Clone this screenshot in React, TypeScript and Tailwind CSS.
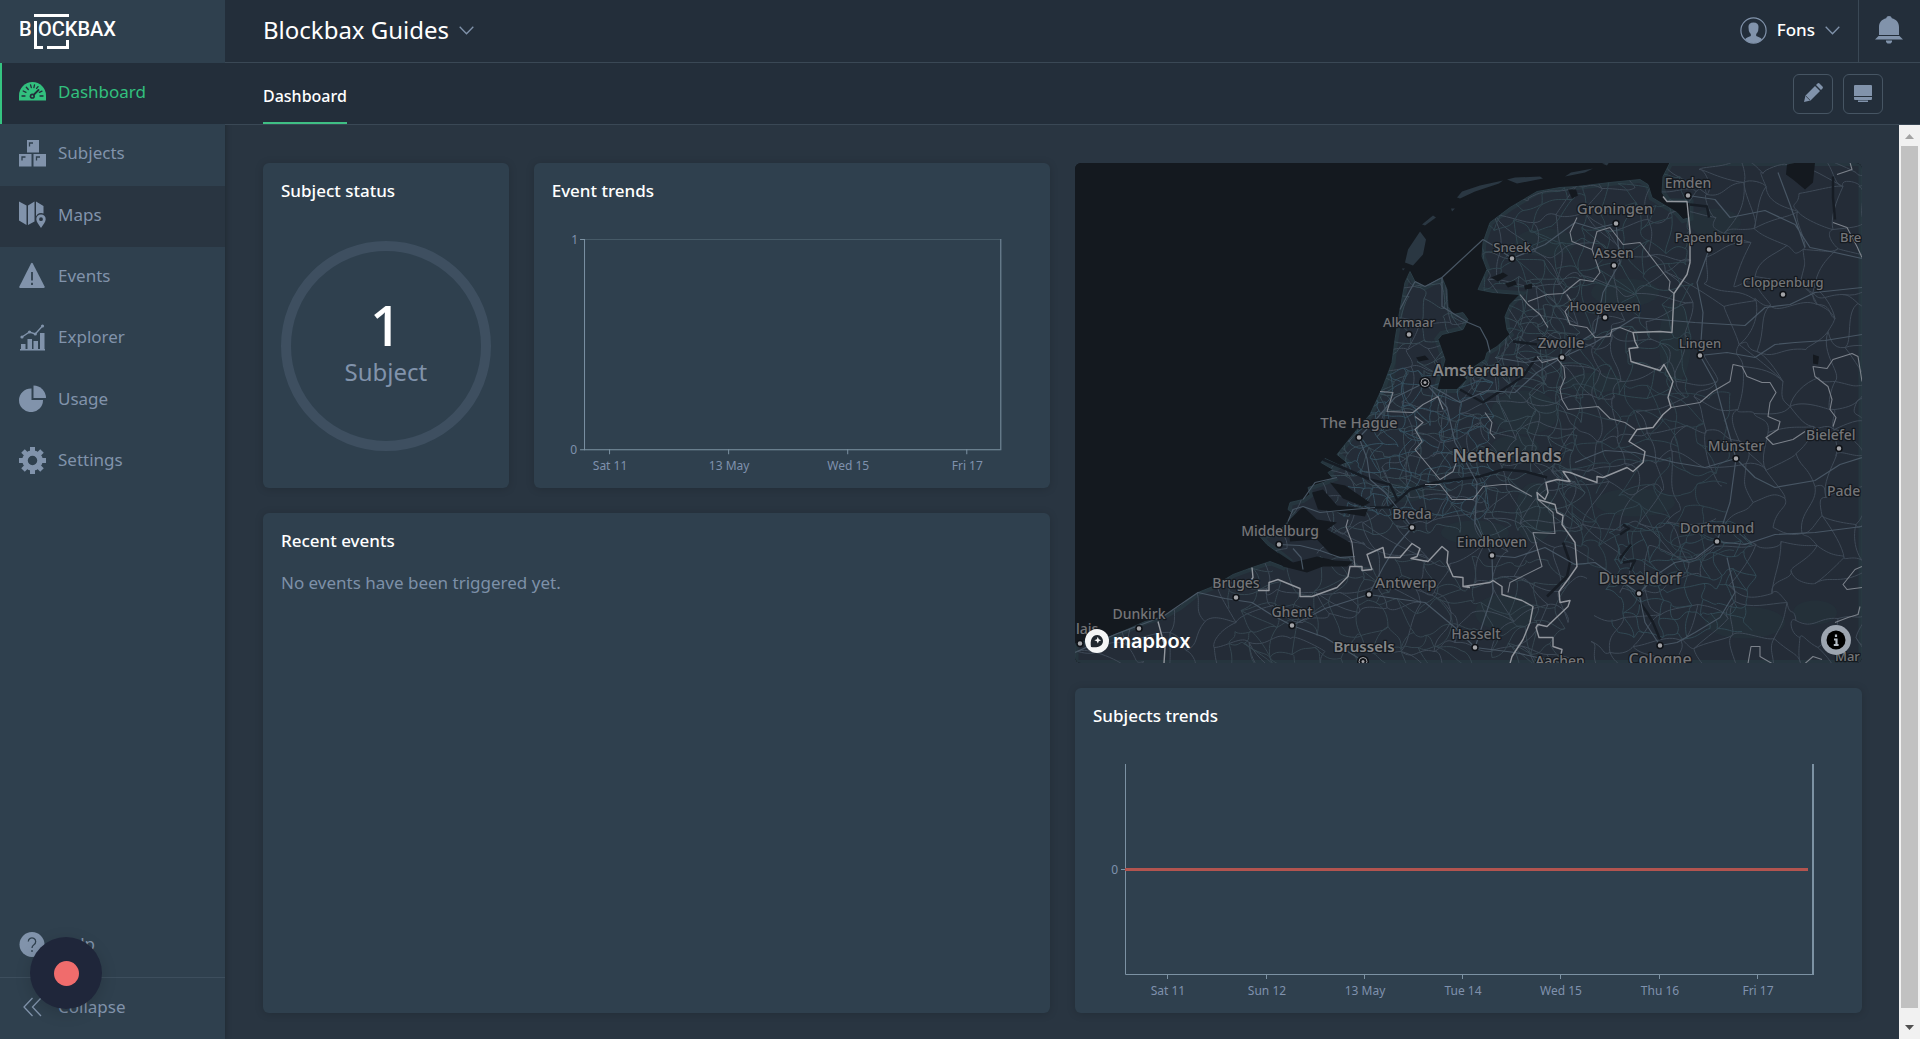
import type { ReactNode } from "react";

type IconProps = { className?: string };

type NavItem = {
  label: string;
  icon: (props: IconProps) => ReactNode;
  state?: "active" | "hover";
};

type Tick = { label: string; x: number };

/* ---------- Icons ---------- */

function GaugeIcon({ className }: IconProps) {
  return (
    <svg className={className} viewBox="0 0 27 27" fill="currentColor">
      <path d="M0 22.500v-5a13.500 13.500 0 0 1 27 0v5z" />
      <g stroke="#232e3a" strokeWidth="1.300" strokeLinecap="round">
        <path d="M3 18h3M21 18h3M4.200 13l2.800 1.300M7.300 9.200l2 2.300M11.500 6.800l.8 2.800M15.500 6.800l-.6 2.800M19 8.600l-1.400 1.800M23 13.200l-2.600 1.200" />
        <path d="M13.500 18 19.500 12" strokeWidth="1.800" />
      </g>
      <circle cx="13.300" cy="18.200" r="2.600" fill="#232e3a" />
      <circle cx="13.300" cy="18.200" r="1" />
    </svg>
  );
}

function BoxesIcon({ className }: IconProps) {
  return (
    <svg className={className} viewBox="0 0 27 27" fill="currentColor">
      <path d="M8 0h12v12.500H8zM0 14h12.500v12.500H0zM14.500 14H27v12.500H14.500z" />
      <path d="M10.500 6.500V3H14M3 20.500V17h3.500M17.500 20.500V17H21" fill="none" stroke="#2f404e" strokeWidth="1.300" />
    </svg>
  );
}

function MapIcon({ className }: IconProps) {
  return (
    <svg className={className} viewBox="0 0 27 27" fill="currentColor">
      <path d="M0 .5 7.500 4.500V24L0 19.500zM9 4.500 15.500.5v20L9 24zM17 .5l7.500 4.500v7.500a5.500 5.500 0 0 0-7.500 3z" />
      <path
        fillRule="evenodd"
        d="M22 13.500a4.600 4.600 0 0 1 4.700 4.700c0 2.700-2.400 5.200-4.700 8.800-2.300-3.600-4.700-6.100-4.700-8.800a4.600 4.600 0 0 1 4.700-4.700zm0 2.800a1.900 1.900 0 1 0 0 3.800 1.900 1.900 0 0 0 0-3.800z"
      />
    </svg>
  );
}

function WarningIcon({ className }: IconProps) {
  return (
    <svg className={className} viewBox="0 0 27 27" fill="currentColor">
      <path d="M12 1.500q.9-1.500 1.800 0L25.600 24.500q.4 1.500-1 1.500H1Q0 26 .4 24.500z" />
      <path d="M13 10v8.500M13 20.800v2.200" stroke="#2f404e" strokeWidth="1.800" />
    </svg>
  );
}

function ExplorerIcon({ className }: IconProps) {
  return (
    <svg className={className} viewBox="0 0 27 27" fill="currentColor">
      <path d="M1 25h25v1.500H1zM2 20h4.500v5.500H2zM8.500 15H13v10.500H8.500zM14.500 17H19v8.500h-4.500zM21 9h4.500v16.500H21z" />
      <path d="M3 13 10.500 8l5.800 2L23.500 2" fill="none" stroke="currentColor" strokeWidth="1.400" />
      <circle cx="3" cy="13" r="1.600" />
      <circle cx="10.500" cy="8" r="1.600" />
      <circle cx="16.300" cy="10" r="1.600" />
      <circle cx="23.500" cy="2" r="1.600" />
    </svg>
  );
}

function PieIcon({ className }: IconProps) {
  return (
    <svg className={className} viewBox="0 0 27 27" fill="currentColor">
      <path d="M12.500 3.500v11.500h11.500A12 11.800 0 1 1 12.500 3.500z" />
      <path d="M14.500.5A12.500 12.500 0 0 1 27 13H14.500z" />
    </svg>
  );
}

function GearIcon({ className }: IconProps) {
  return (
    <svg className={className} viewBox="0 0 27 27" fill="none" stroke="currentColor">
      <circle cx="13.500" cy="13.500" r="7.500" strokeWidth="5.500" />
      <g strokeWidth="5">
        <path d="M13.500 0v4M13.500 23v4M0 13.500h4M23 13.500h4M4 4l3 3M20 20l3 3M23 4l-3 3M7 20l-3 3" />
      </g>
    </svg>
  );
}

function HelpIcon({ className }: IconProps) {
  return (
    <svg className={className} viewBox="0 0 27 27">
      <circle cx="13" cy="13.500" r="12.500" fill="currentColor" />
      <path
        d="M9.300 10.500a3.700 3.700 0 1 1 5.600 3.200c-1.300.8-1.900 1.500-1.900 3.300M13 19v2"
        fill="none"
        stroke="#2f404e"
        strokeWidth="1.300"
      />
    </svg>
  );
}

function ChevronsLeftIcon({ className }: IconProps) {
  return (
    <svg className={className} viewBox="0 0 27 27" fill="none" stroke="currentColor" strokeWidth="1.300">
      <path d="M13.500 5 5 14l8.500 9M22 5l-8.500 9L22 23" />
    </svg>
  );
}

function ChevronDownIcon({ className }: IconProps) {
  return (
    <svg className={className} viewBox="0 0 15 9" fill="none" stroke="currentColor" strokeWidth="1.300">
      <path d="M.7.700 7.500 7.800 14.300.7" />
    </svg>
  );
}

function AvatarIcon({ className }: IconProps) {
  return (
    <svg className={className} viewBox="0 0 27 27">
      <circle cx="13.500" cy="13.500" r="12.600" fill="none" stroke="currentColor" strokeWidth="1.200" />
      <path
        d="M13.500 5.500c3.600 0 5.200 2 5 4.800l-.3 3.200c-.3 1.400-1.200 2.600-2 3.400v2.200c2.500 1.400 4.800 1.600 5.800 3.300a12 12 0 0 1-17 0c1-1.700 3.300-1.900 5.800-3.300v-2.200c-.8-.8-1.700-2-2-3.400l-.3-3.200c-.2-2.800 1.400-4.800 5-4.800z"
        fill="currentColor"
      />
    </svg>
  );
}

function BellIcon({ className }: IconProps) {
  return (
    <svg className={className} viewBox="0 0 28 28" fill="currentColor">
      <path d="M14 0a3 3 0 0 1 2.900 2.300C21.200 3.400 24 6.500 24 11v8H4v-8c0-4.500 2.800-7.600 7.100-8.700A3 3 0 0 1 14 0zM3.500 20h21l3.500 3.500H0zM11 24.500h6v1.500l-1.500 1.500h-3L11 26z" />
    </svg>
  );
}

function PencilIcon({ className }: IconProps) {
  return (
    <svg className={className} viewBox="0 0 20 20" fill="currentColor">
      <path d="M2.500 12.500 12 3l5 5-9.500 9.500L1 19zM13 2l1.500-1.500q1-.8 2 0l3 3q.8 1 0 2L18 7z" />
      <path d="m2.800 13 4.200 4.200" stroke="#232e3a" strokeWidth=".8" />
    </svg>
  );
}

function MonitorIcon({ className }: IconProps) {
  return (
    <svg className={className} viewBox="0 0 20 20" fill="currentColor">
      <path d="M2 2h16q1 0 1 1v10H1V3q0-1 1-1zM1 14h18v1.500q0 1.500-1 1.500H2q-1 0-1-1.500zM5 17.500h10V19H5z" />
    </svg>
  );
}

function Logo() {
  return (
    <svg className="h-[36px] w-[104px]" viewBox="0 0 104 36" fill="#fff" role="img" aria-label="Blockbax">
      <path d="M14 0h35v3H14zM14 7h3v25h6v3h-9zM27 32h19v-6h3v9H27z" />
      <g className="font-['Roboto',sans-serif] text-[20px] font-medium">
        <text x="-1" y="22">B</text>
        <text x="18" y="22">OCKBAX</text>
      </g>
    </svg>
  );
}

/* ---------- Sidebar ---------- */

const navItems: NavItem[] = [
  { label: "Dashboard", icon: GaugeIcon, state: "active" },
  { label: "Subjects", icon: BoxesIcon },
  { label: "Maps", icon: MapIcon, state: "hover" },
  { label: "Events", icon: WarningIcon },
  { label: "Explorer", icon: ExplorerIcon },
  { label: "Usage", icon: PieIcon },
  { label: "Settings", icon: GearIcon },
];

const navStyles = {
  active: "border-[#35c481] bg-[#232e3a] text-[#32c07e]",
  hover: "border-transparent bg-[#293541]",
  idle: "border-transparent",
};

function Sidebar() {
  return (
    <aside className="flex w-[225px] shrink-0 flex-col bg-[#2f404e] text-[#8193ab] shadow-[0_0_6px_rgba(0,0,0,0.3)]">
      <a href="#" className="flex h-[63px] items-start px-5 pt-[14px]">
        <Logo />
      </a>
      <nav className="grid h-[430px] grid-rows-7">
        {navItems.map(({ label, icon: Icon, state }) => (
          <a
            key={label}
            href="#"
            className={`flex items-center gap-3 border-l-2 pb-1 pl-[17px] ${navStyles[state ?? "idle"]}`}
          >
            <Icon className="size-[27px]" />
            {label}
          </a>
        ))}
      </nav>
      <div className="mt-auto">
        <a href="#" className="flex h-[62px] items-center gap-3 pb-1 pl-[19px]">
          <HelpIcon className="size-[27px]" />
          Help
        </a>
        <button
          type="button"
          className="flex h-[62px] w-full items-center gap-3 border-t border-[#3d4e5d] pb-1 pl-[19px] text-left"
        >
          <ChevronsLeftIcon className="size-[27px]" />
          Collapse
        </button>
      </div>
    </aside>
  );
}

/* ---------- Charts ---------- */

const eventTicks: Tick[] = [
  { label: "Sat 11", x: 75 },
  { label: "13 May", x: 194 },
  { label: "Wed 15", x: 313 },
  { label: "Fri 17", x: 432 },
];

const subjectTicks: Tick[] = [
  { label: "Sat 11", x: 92 },
  { label: "Sun 12", x: 191 },
  { label: "13 May", x: 289 },
  { label: "Tue 14", x: 387 },
  { label: "Wed 15", x: 485 },
  { label: "Thu 16", x: 584 },
  { label: "Fri 17", x: 682 },
];

function TimeAxis({ ticks, right }: { ticks: Tick[]; right: number }) {
  return (
    <>
      <path d={`M50.500 20V230.500H${right}`} fill="none" stroke="#7c92a3" />
      {ticks.map((tick) => (
        <g key={tick.label}>
          <path d={`M${tick.x + 0.5} 230v5`} stroke="#7c92a3" />
          <text x={tick.x + 1} y={251} textAnchor="middle">
            {tick.label}
          </text>
        </g>
      ))}
    </>
  );
}

function EventTrendsChart() {
  return (
    <svg className="w-full text-[12px]" viewBox="0 0 516 268" fill="#7f91ad">
      <path d="M50 20.500H466" stroke="#465a67" />
      <path d="M466.500 20V231M46 20.500h5M46 230.500h5" stroke="#7c92a3" />
      <TimeAxis ticks={eventTicks} right={466} />
      <text x="44" y="25" textAnchor="end">1</text>
      <text x="43" y="235" textAnchor="end">0</text>
    </svg>
  );
}

function SubjectsTrendsChart() {
  return (
    <svg className="w-full text-[12px]" viewBox="0 0 787 268" fill="#7f91ad">
      <path d="M738 20V231" stroke="#7c92a3" strokeWidth="2" />
      <path d="M46 125.500h5" stroke="#7c92a3" />
      <TimeAxis ticks={subjectTicks} right={738} />
      <path d="M50 125.500H733" stroke="#b3544f" strokeWidth="3" />
      <text x="43" y="130" textAnchor="end">0</text>
    </svg>
  );
}

/* ---------- Map ---------- */

type Place = {
  name: string;
  x: number;
  y: number;
  size: number;
  anchor?: "start";
  strong?: boolean;
  dot?: [number, number];
};

const places: Place[] = [
  { name: "Emden", x: 613, y: 25, size: 14, dot: [613, 33] },
  { name: "Groningen", x: 540, y: 51, size: 15, dot: [541, 61] },
  { name: "Sneek", x: 437, y: 89, size: 13, dot: [437, 96] },
  { name: "Assen", x: 539, y: 95, size: 14, dot: [539, 103] },
  { name: "Papenburg", x: 634, y: 79, size: 13, dot: [634, 87] },
  { name: "Cloppenburg", x: 708, y: 124, size: 13, dot: [708, 132] },
  { name: "Hoogeveen", x: 530, y: 148, size: 13, dot: [530, 155] },
  { name: "Zwolle", x: 486, y: 185, size: 15, dot: [487, 195] },
  { name: "Lingen", x: 625, y: 185, size: 13, dot: [625, 193] },
  { name: "Bre", x: 765, y: 79, size: 13, anchor: "start" },
  { name: "Amsterdam", x: 358, y: 213, size: 16, anchor: "start", strong: true },
  { name: "Alkmaar", x: 334, y: 164, size: 13, dot: [334, 172] },
  { name: "The Hague", x: 284, y: 265, size: 15, dot: [284, 275] },
  { name: "Netherlands", x: 432, y: 299, size: 18, strong: true },
  { name: "Münster", x: 661, y: 288, size: 14, dot: [661, 296] },
  { name: "Bielefel", x: 731, y: 277, size: 14, anchor: "start", dot: [764, 286] },
  { name: "Pade", x: 752, y: 333, size: 14, anchor: "start" },
  { name: "Dortmund", x: 642, y: 370, size: 15, dot: [642, 379] },
  { name: "Dusseldorf", x: 565, y: 421, size: 16, dot: [564, 431] },
  { name: "Eindhoven", x: 417, y: 384, size: 14, dot: [417, 393] },
  { name: "Breda", x: 337, y: 356, size: 14, dot: [337, 365] },
  { name: "Middelburg", x: 205, y: 373, size: 14, dot: [204, 382] },
  { name: "Bruges", x: 161, y: 425, size: 14, dot: [161, 435] },
  { name: "Antwerp", x: 331, y: 425, size: 15, dot: [294, 432] },
  { name: "Ghent", x: 217, y: 454, size: 14, dot: [217, 463] },
  { name: "Dunkirk", x: 64, y: 456, size: 14, dot: [64, 466] },
  { name: "lais", x: 1, y: 471, size: 14, anchor: "start", dot: [5, 481] },
  { name: "Brussels", x: 289, y: 489, size: 15, strong: true },
  { name: "Hasselt", x: 401, y: 476, size: 14, dot: [400, 485] },
  { name: "Aachen", x: 485, y: 503, size: 14 },
  { name: "Cologne", x: 585, y: 502, size: 16, dot: [585, 483] },
  { name: "Mar", x: 760, y: 498, size: 13, anchor: "start" },
];

const land =
  "M335 109 330 120 325 147 320 177 317 200 308 224 295 252 282 267 262 292 272 300 265 303 250 296 246 300 258 307 253 310 258 316 248 320 233 325 235 332 228 337 215 340 213 347 218 351 213 359 203 370 185 374 192 382 203 390 213 398 208 404 195 399 177 405 158 412 138 424 123 430 105 444 88 454 70 459 52 467 35 474 2 480 0 482V501H787V0H595L588 14 587 30 593 39 615 40 615 55 608 57 602 50 592 44 577 35 573 22 565 17 535 20 502 24 485 25 462 29 435 45 415 60 408 80 407 94 412 107 403 127 418 130 445 132 435 142 430 154 432 167 435 172 422 184 412 190 410 197 398 205 385 210 392 217 382 227 362 227 370 197 363 177 367 172 388 167 393 157 388 150 378 152 373 144 372 127 367 115 350 124 340 119Z";

const islands =
  "M345 69 351 77 348 92 338 103 330 100 333 87zM347 62 358 53 361 55 350 63zM376 46 380 46 377 49zM382 35 387 29 405 23 428 18 424 21 400 29 385 36zM432 17 440 15 465 14 468 16 442 21zM490 14 496 10 518 6 510 10zM527 1 534 0 532 3zM327 106 330 106 328 108z";

const lakes =
  "M228 344 242 357 262 360 252 367 275 380 278 394 258 394 242 377 215 379 213 359zM203 390 218 400 242 394 260 398 278 399 272 404 248 404 232 410 208 404zM237 330 248 327 262 343 293 346 290 354 265 350 243 347zM255 320 270 323 295 340 288 344 268 336zM712 2 722 0 740 0 738 20 730 27 718 17 711 12zM738 192l6 2-1 8-5-1zM416 115l12-5 5 3-10 6zM430 121l10-3 2 4-9 3zM449 123l8-2v5l-7 1zM493 27l8 0 2 6-6 3zM341 195l9-2 4 4-10 2z";

const rivers =
  "M248 297 272 307 295 317 315 322 323 339M295 345 315 345 335 327 360 320 405 314 428 307 450 309 472 315M472 434 492 414 495 400 488 380M565 440 572 450 578 460 585 477M462 194 448 214 428 227 408 240 385 227M438 179 462 182M758 14 758 35 760 57M615 42 632 44 634 55M545 372 554 366 548 362M548 400 560 398 555 408M545 396 556 382";

// Country borders, from the Ems down to the Meuse and along the Scheldt
const borders = [
  "M588 34 592 39 612 39 615 69 615 100 612 112 599 131 597 170 585 169 558 170 560 179 563 185 554 186 556 199 585 208 589 202 598 219 593 235 596 245 588 252 578 265 562 267 554 279 570 289 568 300 558 309 552 305 528 315 522 314 522 320 508 315 495 310 488 309 495 319 482 317 471 320 473 330 470 337 462 330 463 337 480 342 482 350 488 353 487 362 500 380 502 404 493 417 484 429 485 440 495 438 493 444 472 464 463 462 461 465 464 475 478 475 478 484 487 487 485 497",
  "M177 405 178 415 175 419M183 428 194 428 194 420 203 417 225 426 225 434 237 434 262 425 273 414 275 404 287 404 287 408 297 407 292 392 308 385 310 395 325 395 337 381 345 386 342 394 336 396 353 399 367 384 373 389 372 400 378 414 388 415 388 424 395 425M388 424 415 420 418 418 427 424 427 432 447 438 458 444 455 460 448 477 437 494 435 501",
  "M83 459 90 485 89 501",
];

const provinces = [
  "M445 132 453 142 465 152 473 165M453 139 472 132 488 131 505 117 518 119 525 110 517 87 497 79 495 70 502 55",
  "M517 87 522 69 535 65 548 82 565 80 595 119 594 127 599 131M492 132 497 140 490 149 495 162 512 165 520 175 535 174 537 167 545 165 558 170",
  "M462 194 467 200 482 196 489 205 490 215 485 227 487 237 493 247 523 244 535 256 550 260 560 267",
  "M596 245 625 240 638 229 655 219 658 202 667 204 672 214 687 220 695 220 701 230 695 240 693 254 705 259 703 267 691 275 698 282 718 277 730 269",
  "M787 219 783 194 777 191 758 197 752 206 738 204 740 214 753 224 757 237 755 247 761 255 758 264",
  "M787 404 780 407 768 422 772 427 787 425M785 444 783 452 773 455 760 460M673 501 676 484 685 484 685 494 697 501M730 501 738 494 747 497",
  "M433 430 435 420 467 404 458 370 480 371 478 350 463 337M385 337 398 337 408 324 427 322 435 322 457 334",
  "M305 229 318 230 312 249 338 250 348 242 363 234 368 247M340 254 348 260 340 267 347 279 340 287 355 305 365 317 378 309 385 290",
  "M273 357 271 364 277 380 280 404M350 322 365 322 377 337 395 337",
  "M762 12 777 7 775 0M758 60 772 65 782 84 787 95M410 250 417 260 415 270 420 276",
];

const mainRoads = [
  "M367 115 408 77M340 119 350 124 367 115 367 144 393 160M393 160 405 165 412 178 415 190M325 147 335 128 340 119",
  "M228 337 240 320 262 315M213 359 218 347 228 344 245 350 265 348 300 345M204 382 225 383 245 388 265 395 280 394M228 407 226 395 218 386",
  "M613 33 640 37 655 55 690 48 720 62 735 85 760 90 787 96M730 85 715 42 703 10",
  "M0 490 40 472 88 454 123 430 150 436 177 440 196 452 217 463 250 446 294 432 308 405 320 385 337 365 322 345 310 330 295 317 292 296 284 275 300 258 320 235 350 220",
  "M350 220 385 240 412 228 440 230 462 210 487 195 500 182 520 170 528 130 545 100 541 61 520 66 500 60 470 82 437 96 420 84 408 77M350 220 372 245 380 280 402 320 400 360 417 393 418 430 400 485",
  "M417 393 440 395 470 385 500 402 520 400 564 431 582 412 600 400 620 396 642 379 655 340 661 296 648 250 640 220 625 193 628 150 622 120 634 87M642 379 670 382 700 372 740 370 787 364M564 431 570 460 585 483 602 480 620 470 645 455 660 430 652 395",
  "M420 195 450 200 487 195 520 180 560 155 620 160 670 163 690 145 715 142 740 130 787 125M625 193 652 190 680 195 700 182 720 180 750 178 787 172",
  "M500 300 530 288 560 290 600 300 630 305 661 296 680 315 700 325 740 318 765 302 787 295M217 463 250 475 289 499M294 432 320 436 350 440 380 465 400 485 440 490 485 500",
];

// Deterministic jittered grid that stands in for the secondary road network
function roadMesh(x0: number, y0: number, x1: number, y1: number, step: number, seed: number) {
  let s = seed * 7919;
  const rand = () => {
    s = (s * 16807) % 2147483647;
    return s / 2147483647;
  };
  const cols = Math.ceil((x1 - x0) / step) + 1;
  const rows = Math.ceil((y1 - y0) / step) + 1;
  const nodes = Array.from({ length: rows }, (_, r) =>
    Array.from({ length: cols }, (_, c) => ({
      x: Math.round(x0 + (c + (r % 2) * 0.4 + (rand() - 0.5) * 0.8) * step),
      y: Math.round(y0 + (r + (rand() - 0.5) * 0.8) * step),
    })),
  );
  let d = "";
  const link = (a: { x: number; y: number }, b?: { x: number; y: number }) => {
    if (!b) return;
    const bend = () => (rand() - 0.5) * step * 0.7;
    const x = (a.x * 2 + b.x) / 3;
    const y = (a.y * 2 + b.y) / 3;
    const u = (a.x + b.x * 2) / 3;
    const v = (a.y + b.y * 2) / 3;
    d += `M${a.x} ${a.y}C${Math.round(x + bend())} ${Math.round(y + bend())} ${Math.round(u + bend())} ${Math.round(v + bend())} ${b.x} ${b.y}`;
  };
  nodes.forEach((row, r) =>
    row.forEach((node, c) => {
      if (rand() < 0.82) link(node, row[c + 1]);
      if (rand() < 0.82) link(node, nodes[r + 1]?.[c]);
      if (rand() < 0.15) link(node, nodes[r + 1]?.[c + 1]);
    }),
  );
  return d;
}

const meshes = [
  { d: roadMesh(0, 0, 787, 501, 30, 7), color: "#3f4a57" },
  { d: roadMesh(400, 20, 600, 230, 21, 31), color: "#31464f" },
  { d: roadMesh(250, 120, 480, 350, 19, 11), color: "#384a54" },
  { d: roadMesh(270, 210, 400, 340, 14, 5), color: "#36505f" },
  { d: roadMesh(535, 365, 665, 470, 15, 23), color: "#324954" },
  { d: roadMesh(150, 400, 480, 501, 22, 17), color: "#364650" },
  { d: roadMesh(480, 230, 640, 380, 24, 41), color: "#30434d" },
];

const forests = [
  [470, 80, 30, 14], [550, 130, 34, 14], [600, 180, 16, 40], [450, 250, 34, 22], [440, 285, 24, 12],
  [330, 330, 20, 10], [400, 370, 34, 12], [315, 195, 6, 40], [640, 60, 26, 14], [460, 350, 20, 30],
  [560, 340, 40, 14], [520, 220, 30, 10], [430, 450, 30, 18], [670, 460, 40, 16], [740, 450, 22, 12],
];

function NetherlandsMap() {
  return (
    <svg
      className="size-full font-['Noto_Sans',sans-serif]"
      viewBox="0 0 787 501"
      preserveAspectRatio="xMidYMid slice"
      role="img"
      aria-label="Map of the Netherlands"
    >
      <clipPath id="land">
        <path d={land} />
      </clipPath>
      <rect width="787" height="501" fill="#14191f" />
      <path d={islands} fill="#2a3742" />
      <path d={land} fill="#242c37" stroke="#2b3b45" strokeWidth="1" />
      <g clipPath="url(#land)" fill="none">
        {forests.map(([cx, cy, rx, ry]) => (
          <ellipse key={`${cx}-${cy}`} cx={cx} cy={cy} rx={rx} ry={ry} fill="#264043" opacity="0.22" />
        ))}
        <path d={land} stroke="#2a4349" strokeWidth="7" opacity="0.4" />
        {meshes.map(({ d, color }) => (
          <path key={color} d={d} stroke={color} strokeWidth="1" />
        ))}
      </g>
      <path d={lakes} fill="#14191f" />
      <g fill="none" strokeLinejoin="round">
        <path d={rivers} stroke="#161c24" strokeWidth="2.500" />
        {mainRoads.map((d) => (
          <path key={d} d={d} stroke="#485664" strokeWidth="1.200" />
        ))}
        {provinces.map((d) => (
          <path key={d} d={d} stroke="#7c828b" strokeWidth="1.100" />
        ))}
        {borders.map((d) => (
          <path key={d} d={d} stroke="#93979e" strokeWidth="1.400" />
        ))}
      </g>
      {places.map(({ dot, name }) =>
        dot ? <circle key={name} cx={dot[0]} cy={dot[1]} r="3" fill="#a3a4a8" stroke="#0e1116" strokeWidth="1.500" /> : null,
      )}
      {/* Capitals */}
      {[[350, 220], [288, 499]].map(([cx, cy]) => (
        <g key={cx} fill="none" stroke="#a3a4a8">
          <circle cx={cx} cy={cy} r="6" fill="#0e1116" stroke="none" />
          <circle cx={cx} cy={cy} r="4" />
          <circle cx={cx} cy={cy} r="1.500" fill="#a3a4a8" stroke="none" />
        </g>
      ))}
      <g stroke="#14191f" strokeWidth="2.500" strokeLinejoin="round" paintOrder="stroke">
        {places.map(({ name, x, y, size, anchor, strong }) => (
          <text
            key={name}
            x={x}
            y={y}
            fontSize={size}
            fontWeight={strong ? 600 : 500}
            textAnchor={anchor ?? "middle"}
            fill={strong ? "#868789" : "#747578"}
          >
            {name}
          </text>
        ))}
      </g>
    </svg>
  );
}

function MapCard() {
  return (
    <section className="relative col-span-3 row-span-3 overflow-hidden rounded-md bg-[#14191f]">
      <NetherlandsMap />
      <a href="#" className="absolute bottom-[10px] left-[10px] flex items-center gap-1 text-white">
        <svg className="size-6" viewBox="0 0 24 24">
          <circle cx="12" cy="12" r="12" fill="#f4f5f6" />
          <path d="M6 18c-1-6 .5-12 6.500-12a6 6 0 0 1 5.500 6c0 5.500-6 7-12 6z" fill="#20272f" />
          <path d="m12.800 7.800 1 2.400 2.400 1-2.400 1-1 2.400-1-2.400-2.400-1 2.400-1z" fill="#f4f5f6" />
        </svg>
        <span className="font-['Inter',sans-serif] text-[20px] leading-6 font-semibold">mapbox</span>
      </a>
      <button
        type="button"
        aria-label="Map information"
        className="absolute right-[11px] bottom-[8px] flex size-[30px] items-center justify-center rounded-full bg-[#9da5b0]"
      >
        <svg className="size-5" viewBox="0 0 20 20">
          <circle cx="10" cy="10" r="9.500" fill="#000" />
          <path d="M10 4.500v2.500M8 9.500h2.500v5M7.800 15h4.800" stroke="#b5bcc5" strokeWidth="2.200" fill="none" />
        </svg>
      </button>
    </section>
  );
}

/* ---------- Page ---------- */

function Card({ title, className, children }: { title: string; className: string; children: ReactNode }) {
  return (
    <section className={`overflow-hidden rounded-md bg-[#2f404e] shadow-[0_1px_8px_rgba(0,0,0,0.15)] ${className}`}>
      <h2 className="flex h-14 items-center px-[18px] font-medium text-white">{title}</h2>
      {children}
    </section>
  );
}

function TopBar() {
  return (
    <header className="flex h-[63px] items-stretch border-b border-[#3a4855] bg-[#232e3a] pl-[38px]">
      <button type="button" className="flex items-center gap-[10px] pb-[2px] text-[24px] text-white">
        Blockbax Guides
        <ChevronDownIcon className="h-[9px] w-[15px] text-[#8193ab]" />
      </button>
      <button type="button" className="ml-auto flex items-center gap-[10px] pr-[18px] pb-[2px] font-medium text-white">
        <AvatarIcon className="size-[27px] text-[#8193ab]" />
        Fons
        <ChevronDownIcon className="h-[9px] w-[15px] text-[#8193ab]" />
      </button>
      <button
        type="button"
        aria-label="Notifications"
        className="flex w-[62px] items-center border-l border-[#3a4855] pb-[2px] pl-4 text-[#8193ab]"
      >
        <BellIcon className="size-7" />
      </button>
    </header>
  );
}

function TabBar() {
  return (
    <div className="flex h-[62px] items-stretch justify-between border-b border-[#3a4855] bg-[#232e3a] pr-[37px] pl-[38px]">
      <a href="#" className="flex items-center border-b-2 border-[#3fbf84] pt-[6px] text-[16px] font-medium text-white">
        Dashboard
      </a>
      <div className="flex items-center gap-[10px] text-[#8193ab]">
        <button
          type="button"
          aria-label="Edit dashboard"
          className="flex size-10 items-center justify-center rounded-md border border-[#465563] pb-[2px]"
        >
          <PencilIcon className="size-5" />
        </button>
        <button
          type="button"
          aria-label="Full screen"
          className="flex size-10 items-center justify-center rounded-md border border-[#465563] pb-[2px]"
        >
          <MonitorIcon className="size-5" />
        </button>
      </div>
    </div>
  );
}

function ScrollRail() {
  return (
    <div className="flex w-[21px] shrink-0 flex-col bg-[#f1f1f1]" aria-hidden="true">
      <svg className="h-[21px] w-full" viewBox="0 0 21 21">
        <path d="m6 14 4.500-5 4.500 5z" fill="#a3a3a3" />
      </svg>
      <div className="mx-[2px] flex-1 bg-[#c1c1c1]" />
      <svg className="h-[31px] w-full" viewBox="0 0 21 31">
        <path d="m6 17 4.500 5 4.500-5z" fill="#505050" />
      </svg>
    </div>
  );
}

export default function App() {
  return (
    <div className="flex min-h-screen bg-[#293541] font-['Noto_Sans',sans-serif] text-[17px] leading-6">
      <Sidebar />
      <div className="flex min-w-0 flex-1 flex-col">
        <TopBar />
        <TabBar />
        <div className="flex flex-1">
          <main className="grid min-w-0 flex-1 auto-rows-[150px] grid-cols-6 content-start gap-[25px] pt-[38px] pr-[37px] pb-[26px] pl-[38px]">
            <Card title="Subject status" className="row-span-2">
              <div className="px-[18px] pt-[22px]">
                <div className="flex aspect-square flex-col items-center justify-center rounded-full border-[10px] border-[#3e4f60] pb-1">
                  <span className="text-[56px] leading-[56px] font-medium text-white">1</span>
                  <span className="text-[24px] leading-10 text-[#8193ab]">Subject</span>
                </div>
              </div>
            </Card>
            <Card title="Event trends" className="col-span-2 row-span-2">
              <EventTrendsChart />
            </Card>
            <MapCard />
            <Card title="Recent events" className="col-span-3 row-span-3">
              <p className="px-[18px] pt-[2px] text-[#7d90a8]">No events have been triggered yet.</p>
            </Card>
            <Card title="Subjects trends" className="col-span-3 row-span-2">
              <SubjectsTrendsChart />
            </Card>
          </main>
          <ScrollRail />
        </div>
      </div>
      {/* Floating recorder control */}
      <button
        type="button"
        aria-label="Stop recording"
        className="fixed bottom-[30px] left-[30px] flex size-[72px] items-center justify-center rounded-full bg-[#1f263a] shadow-[0_4px_16px_rgba(0,0,0,0.15)]"
      >
        <span className="size-[25px] rounded-full bg-[#f06c6c]" />
      </button>
    </div>
  );
}
